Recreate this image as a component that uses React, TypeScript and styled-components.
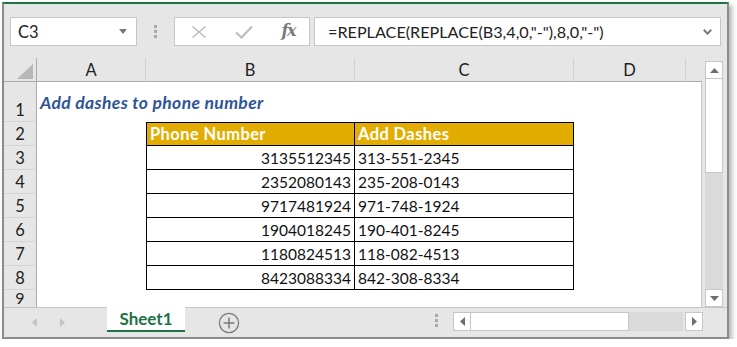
import React from 'react';
import styled, { createGlobalStyle } from 'styled-components';

const GlobalStyle = createGlobalStyle`
  html, body {
    margin: 0;
    padding: 0;
    background: #ffffff;
  }
  * {
    box-sizing: border-box;
  }
`;

const FONT = `Lato, "Liberation Sans", sans-serif`;

const rows = [
  { phone: '3135512345', dashed: '313-551-2345' },
  { phone: '2352080143', dashed: '235-208-0143' },
  { phone: '9717481924', dashed: '971-748-1924' },
  { phone: '1904018245', dashed: '190-401-8245' },
  { phone: '1180824513', dashed: '118-082-4513' },
  { phone: '8423088334', dashed: '842-308-8334' },
];

const columns = ['A', 'B', 'C', 'D', ''];

const App: React.FC = () => {
  return (
    <>
      <GlobalStyle />
      <Window>
        <FormulaBar>
          <NameBox>
            <span>C3</span>
            <svg width="8" height="5" viewBox="0 0 8 5">
              <path d="M0 0 L8 0 L4 5 Z" fill="#777" />
            </svg>
          </NameBox>
          <Grip>
            <i />
            <i />
            <i />
          </Grip>
          <FxBox>
            <svg width="16" height="14" viewBox="0 0 16 14">
              <path d="M1.5 1.5 L14.5 12.5 M14.5 1.5 L1.5 12.5" stroke="#bdbdbd" strokeWidth="1.6" fill="none" />
            </svg>
            <svg width="18" height="14" viewBox="0 0 18 14">
              <path d="M1 7.5 L6.5 12.5 L17 1.5" stroke="#bdbdbd" strokeWidth="2.2" fill="none" />
            </svg>
            <Fx>fx</Fx>
          </FxBox>
          <FormulaInput>
            <span>=REPLACE(REPLACE(B3,4,0,"-"),8,0,"-")</span>
            <svg width="9" height="6" viewBox="0 0 9 6">
              <path d="M0.8 0.8 L4.5 4.6 L8.2 0.8" stroke="#777" strokeWidth="2" fill="none" />
            </svg>
          </FormulaInput>
        </FormulaBar>

        <SheetArea>
          <Grid>
            <Corner>
              <svg width="16" height="15" viewBox="0 0 16 15">
                <path d="M16 0 L16 15 L0 15 Z" fill="#b7b7b7" />
              </svg>
            </Corner>
            {columns.map((c, i) => (
              <ColHead key={i} $last={i === columns.length - 1}>{c}</ColHead>
            ))}

            <RowHead>1</RowHead>
            <Cell $span={5}>
              <Title>Add dashes to phone number</Title>
            </Cell>

            <RowHead>2</RowHead>
            <Cell />
            <TableCell $head $first>Phone Number</TableCell>
            <TableCell $head>Add Dashes</TableCell>
            <Cell $span={2} />

            {rows.map((r, i) => (
              <React.Fragment key={r.phone}>
                <RowHead>{i + 3}</RowHead>
                <Cell />
                <TableCell $first $right>{r.phone}</TableCell>
                <TableCell>{r.dashed}</TableCell>
                <Cell $span={2} />
              </React.Fragment>
            ))}

            <RowHead $cut>9</RowHead>
            <Cell $span={5} />
          </Grid>

          <VScroll>
            <ScrollBtn>
              <svg width="9" height="5" viewBox="0 0 9 5">
                <path d="M0 5 L4.5 0 L9 5 Z" fill="#6e6e6e" />
              </svg>
            </ScrollBtn>
            <VThumb />
            <VTrack />
            <ScrollBtn>
              <svg width="9" height="5" viewBox="0 0 9 5">
                <path d="M0 0 L4.5 5 L9 0 Z" fill="#6e6e6e" />
              </svg>
            </ScrollBtn>
          </VScroll>
        </SheetArea>

        <TabBar>
          <TabNav>
            <svg width="5" height="9" viewBox="0 0 5 9">
              <path d="M5 0 L0 4.5 L5 9 Z" fill="#c4c4c4" />
            </svg>
            <svg width="5" height="9" viewBox="0 0 5 9">
              <path d="M0 0 L5 4.5 L0 9 Z" fill="#c4c4c4" />
            </svg>
          </TabNav>
          <SheetTab>Sheet1</SheetTab>
          <AddSheet>
            <svg width="22" height="22" viewBox="0 0 22 22">
              <circle cx="11" cy="11" r="9.6" stroke="#7a7a7a" strokeWidth="1.3" fill="none" />
              <path d="M11 5.5 V16.5 M5.5 11 H16.5" stroke="#7a7a7a" strokeWidth="1.5" />
            </svg>
          </AddSheet>
          <Grip $h>
            <i />
            <i />
            <i />
          </Grip>
          <HScroll>
            <HBtn>
              <svg width="5" height="9" viewBox="0 0 5 9">
                <path d="M5 0 L0 4.5 L5 9 Z" fill="#6e6e6e" />
              </svg>
            </HBtn>
            <HThumb />
            <HTrack />
            <HBtn>
              <svg width="5" height="9" viewBox="0 0 5 9">
                <path d="M0 0 L5 4.5 L0 9 Z" fill="#6e6e6e" />
              </svg>
            </HBtn>
          </HScroll>
        </TabBar>
      </Window>
    </>
  );
};

export default App;

const Window = styled.div`
  margin: 2px 0 0 2px;
  width: 727px;
  height: 337px;
  background: #e6e6e6;
  border-top: 2px solid #217346;
  border-left: 2px solid #8c8c8c;
  border-right: 2px solid #8c8c8c;
  border-bottom: 2px solid #8c8c8c;
  box-shadow: 3px 3px 5px rgba(0, 0, 0, 0.3);
  display: flex;
  flex-direction: column;
  font-family: ${FONT};
  color: #222;
`;

const FormulaBar = styled.div`
  height: 54px;
  display: flex;
  align-items: flex-start;
  padding: 13px 0 0 6px;
`;

const Box = styled.div`
  height: 29px;
  background: #fff;
  border: 1px solid #c6c6c6;
  display: flex;
  align-items: center;
`;

const NameBox = styled(Box)`
  width: 127px;
  padding: 0 9px 0 7px;
  justify-content: space-between;
  font-size: 16.5px;
`;

const Grip = styled.div<{ $h?: boolean }>`
  width: ${({ $h }) => ($h ? '17px' : '37px')};
  height: 29px;
  display: flex;
  flex-direction: column;
  align-items: center;
  justify-content: center;
  gap: 2px;
  margin-top: ${({ $h }) => ($h ? '-2px' : '0')};

  i {
    display: block;
    width: 3px;
    height: 3px;
    background: #a8a8a8;
  }
`;

const FxBox = styled(Box)`
  width: 136px;
  padding: 0 14px 0 16px;
  justify-content: space-between;
`;

const Fx = styled.span`
  font-family: "DejaVu Serif", "Liberation Serif", serif;
  font-style: italic;
  font-weight: 700;
  font-size: 16px;
  color: #7a7a7a;
  letter-spacing: -1.5px;
  padding-bottom: 2px;
`;

const FormulaInput = styled(Box)`
  width: 407px;
  margin-left: 4px;
  padding: 0 8px 0 13px;
  justify-content: space-between;
  font-size: 16.2px;
`;

const SheetArea = styled.div`
  height: 249px;
  display: flex;
`;

const Grid = styled.div`
  width: 698px;
  display: grid;
  grid-template-columns: 33px 109px 209px 219px 112px 16px;
  grid-template-rows: 24px 40px repeat(7, 24px) 17px;
  background: #fff;
  border-right: 1px solid #c6c6c6;
`;

const Corner = styled.div`
  background: #e6e6e6;
  border-right: 1px solid #ababab;
  border-bottom: 1px solid #ababab;
  display: flex;
  align-items: flex-end;
  justify-content: flex-end;
  padding: 0 3px 2px 0;
`;

const ColHead = styled.div<{ $last?: boolean }>`
  background: #e6e6e6;
  border-bottom: 1px solid #ababab;
  border-right: ${({ $last }) => ($last ? 'none' : '1px solid #d0d0d0')};
  display: flex;
  align-items: center;
  justify-content: center;
  font-size: 16.5px;
  padding-top: 1px;
`;

const RowHead = styled.div<{ $cut?: boolean }>`
  background: #e6e6e6;
  border-right: 1px solid #ababab;
  border-bottom: ${({ $cut }) => ($cut ? 'none' : '1px solid #d4d4d4')};
  display: flex;
  align-items: ${({ $cut }) => ($cut ? 'flex-start' : 'flex-end')};
  justify-content: center;
  font-size: ${({ $cut }) => ($cut ? '16px' : '16.5px')};
  line-height: ${({ $cut }) => ($cut ? '16px' : '22px')};
`;

const Cell = styled.div<{ $span?: number }>`
  grid-column: span ${({ $span }) => $span ?? 1};
  display: flex;
  align-items: flex-end;
  overflow: hidden;
`;

const Title = styled.div`
  font-style: italic;
  font-weight: 700;
  font-size: 17.5px;
  letter-spacing: 0.35px;
  color: #2f5597;
  padding: 0 0 9px 3px;
`;

const TableCell = styled.div<{ $head?: boolean; $first?: boolean; $right?: boolean }>`
  border-right: 1px solid #000;
  border-bottom: 1px solid #000;
  border-left: ${({ $first }) => ($first ? '1px solid #000' : 'none')};
  border-top: ${({ $head }) => ($head ? '1px solid #000' : 'none')};
  background: ${({ $head }) => ($head ? '#e2ac00' : '#fff')};
  color: ${({ $head }) => ($head ? '#fff' : '#111')};
  font-weight: ${({ $head }) => ($head ? 700 : 400)};
  font-size: ${({ $head }) => ($head ? '16.5px' : '15.5px')};
  letter-spacing: ${({ $head }) => ($head ? '0.4px' : '0')};
  display: flex;
  align-items: center;
  justify-content: ${({ $right }) => ($right ? 'flex-end' : 'flex-start')};
  padding: 0 3px 0 3px;
`;

const VScroll = styled.div`
  width: 25px;
  padding: 3px 4px 0 3px;
  display: flex;
  flex-direction: column;
`;

const ScrollBtn = styled.div`
  height: 18px;
  background: #fff;
  border: 1px solid #c6c6c6;
  display: flex;
  align-items: center;
  justify-content: center;
`;

const VThumb = styled.div`
  height: 94px;
  background: #fff;
  border: 1px solid #c6c6c6;
  border-top: none;
`;

const VTrack = styled.div`
  flex: 1;
  background: #dadada;
`;

const TabBar = styled.div`
  flex: 1;
  display: flex;
  align-items: flex-start;
  border-top: 1px solid #c6c6c6;
`;

const TabNav = styled.div`
  width: 103px;
  height: 29px;
  display: flex;
  align-items: center;
  gap: 23px;
  padding-left: 28px;
`;

const SheetTab = styled.div`
  width: 78px;
  height: 25px;
  margin-top: -1px;
  background: #fff;
  border-bottom: 2px solid #217346;
  color: #217346;
  font-weight: 700;
  font-size: 17px;
  display: flex;
  align-items: center;
  justify-content: center;
`;

const AddSheet = styled.div`
  width: 243px;
  height: 29px;
  display: flex;
  align-items: center;
  padding-left: 33px;
`;

const HScroll = styled.div`
  width: 250px;
  height: 19px;
  margin: 4px 0 0 8px;
  display: flex;
`;

const HBtn = styled.div`
  width: 18px;
  height: 19px;
  background: #fff;
  border: 1px solid #c6c6c6;
  display: flex;
  align-items: center;
  justify-content: center;
`;

const HThumb = styled.div`
  width: 158px;
  background: #fff;
  border: 1px solid #c6c6c6;
  border-left: none;
`;

const HTrack = styled.div`
  flex: 1;
  background: #dadada;
  margin-right: 2px;
`;
